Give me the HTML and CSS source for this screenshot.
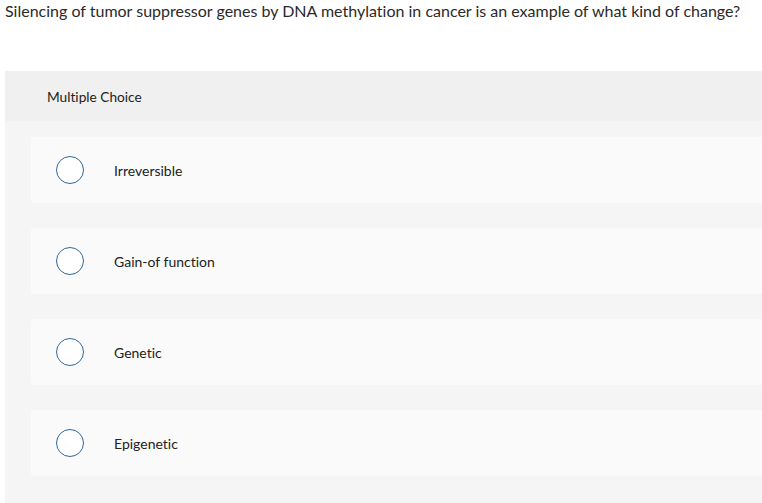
FILE: index.html
```html
<!DOCTYPE html>
<html>
<head>
<meta charset="utf-8">
<link rel="stylesheet" href="styles.css">
</head>
<body>
<div class="question">Silencing of tumor suppressor genes by DNA methylation in cancer is an example of what kind of change?</div>
<div class="panel">
  <div class="panel-head">Multiple Choice</div>
  <div class="options">
    <div class="option"><span class="radio"></span><span class="label">Irreversible</span></div>
    <div class="option"><span class="radio"></span><span class="label">Gain-of function</span></div>
    <div class="option"><span class="radio"></span><span class="label">Genetic</span></div>
    <div class="option"><span class="radio"></span><span class="label">Epigenetic</span></div>
  </div>
</div>
</body>
</html>
```
FILE: styles.css
```css
html, body {
  margin: 0;
  padding: 0;
  background: #ffffff;
  overflow: hidden;
}
body {
  font-family: Lato, "Liberation Sans", sans-serif;
  font-variant-ligatures: none;
  font-feature-settings: "liga" 0;
  color: #222222;
  width: 762px;
  height: 503px;
}
.question {
  font-size: 16px;
  line-height: 20px;
  padding: 1px 0 0 5px;
  white-space: nowrap;
  color: #2a2a2a;
}
.panel {
  margin: 50px 0 0 5px;
  background: #f5f5f5;
  height: 432px;
}
.panel-head {
  background: #f0f0f0;
  height: 50px;
  box-sizing: border-box;
  padding-left: 42px;
  display: flex;
  align-items: center;
  font-size: 13.7px;
}
.options {
  display: flex;
  flex-direction: column;
  gap: 25px;
  padding: 16px 0 0 26px;
}
.option {
  background: #fafafa;
  height: 66px;
  border-radius: 3px 0 0 3px;
  display: flex;
  align-items: center;
  padding-left: 25px;
}
.radio {
  width: 28px;
  height: 28px;
  box-sizing: border-box;
  border: 1.5px solid #2c69a0;
  border-radius: 50%;
  background: #ffffff;
  flex: none;
}
.label {
  margin-left: 30px;
  font-size: 14px;
  color: #222222;
}
```
